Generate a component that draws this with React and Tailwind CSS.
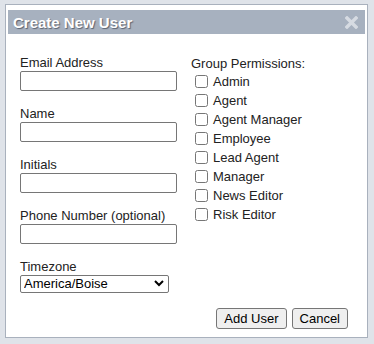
import React from "react";

const groups = [
  "Admin",
  "Agent",
  "Agent Manager",
  "Employee",
  "Lead Agent",
  "Manager",
  "News Editor",
  "Risk Editor",
];

function Field({ label, children }) {
  return (
    <div className="flex flex-col">
      <label className="h-[16px] leading-[16px]">{label}</label>
      {children}
    </div>
  );
}

function TextInput() {
  return (
    <input
      type="text"
      className="w-[157px] h-[20px] border border-[#767676] rounded-[2px] bg-white px-1 outline-none"
    />
  );
}

export default function App() {
  return (
    <div
      className="w-[374px] h-[344px] bg-[#dfe3e9] pt-[4px] pl-[5px] pr-[6px] pb-[6px]"
      style={{ fontFamily: '"Liberation Sans", Arial, sans-serif' }}
    >
      <div className="h-full border border-[#a9b1bd] bg-white pt-[5px] px-[2px] pb-[2px] flex flex-col">
        {/* Title bar */}
        <div className="h-[24px] bg-[#a7b1bf] flex items-center justify-between pl-[5px] pr-[7px]">
          <span
            className="text-white font-bold text-[15px] leading-none"
            style={{ textShadow: "1px 1px 1px #5a6270" }}
          >
            Create New User
          </span>
          <svg width="13" height="13" viewBox="0 0 13 13">
            <path
              d="M2 2 L11 11 M11 2 L2 11"
              stroke="#d6dbe2"
              strokeWidth="3.4"
              strokeLinecap="square"
            />
          </svg>
        </div>

        {/* Body */}
        <div className="flex-1 flex flex-col text-[13px] text-[#222] pl-[12px] pr-[17px] pt-[21px]">
          <div className="flex">
            <div className="w-[171px] flex flex-col gap-[15px]">
              <Field label="Email Address">
                <TextInput />
              </Field>
              <Field label="Name">
                <TextInput />
              </Field>
              <Field label="Initials">
                <TextInput />
              </Field>
              <Field label="Phone Number (optional)">
                <TextInput />
              </Field>
              <Field label="Timezone">
                <div className="relative w-[149px] h-[18px] -mt-[1px]">
                  <select className="appearance-none w-full h-full border border-[#767676] rounded-[2px] bg-white pl-[3px] text-[13px] text-black leading-none outline-none">
                    <option>America/Boise</option>
                  </select>
                  <svg
                    className="absolute right-[5px] top-[6px] pointer-events-none"
                    width="10"
                    height="7"
                    viewBox="0 0 10 7"
                  >
                    <path d="M1 1 L5 5 L9 1" fill="none" stroke="#000" strokeWidth="2" />
                  </svg>
                </div>
              </Field>
            </div>

            <div className="flex flex-col pt-[1px]">
              <div className="h-[16px] leading-[16px]">Group Permissions:</div>
              {groups.map((g) => (
                <label key={g} className="flex items-center h-[19px]">
                  <input type="checkbox" className="w-[13px] h-[13px] ml-[4px] mr-[5px] m-0" />
                  <span>{g}</span>
                </label>
              ))}
            </div>
          </div>

          <div className="flex justify-end gap-[5px] mt-auto mb-[6px]">
            <button className="h-[21px] px-[7px] border border-[#767676] rounded-[3px] bg-[#efefef] text-black text-[13px]">
              Add User
            </button>
            <button className="h-[21px] px-[7px] border border-[#767676] rounded-[3px] bg-[#efefef] text-black text-[13px]">
              Cancel
            </button>
          </div>
        </div>
      </div>
    </div>
  );
}
